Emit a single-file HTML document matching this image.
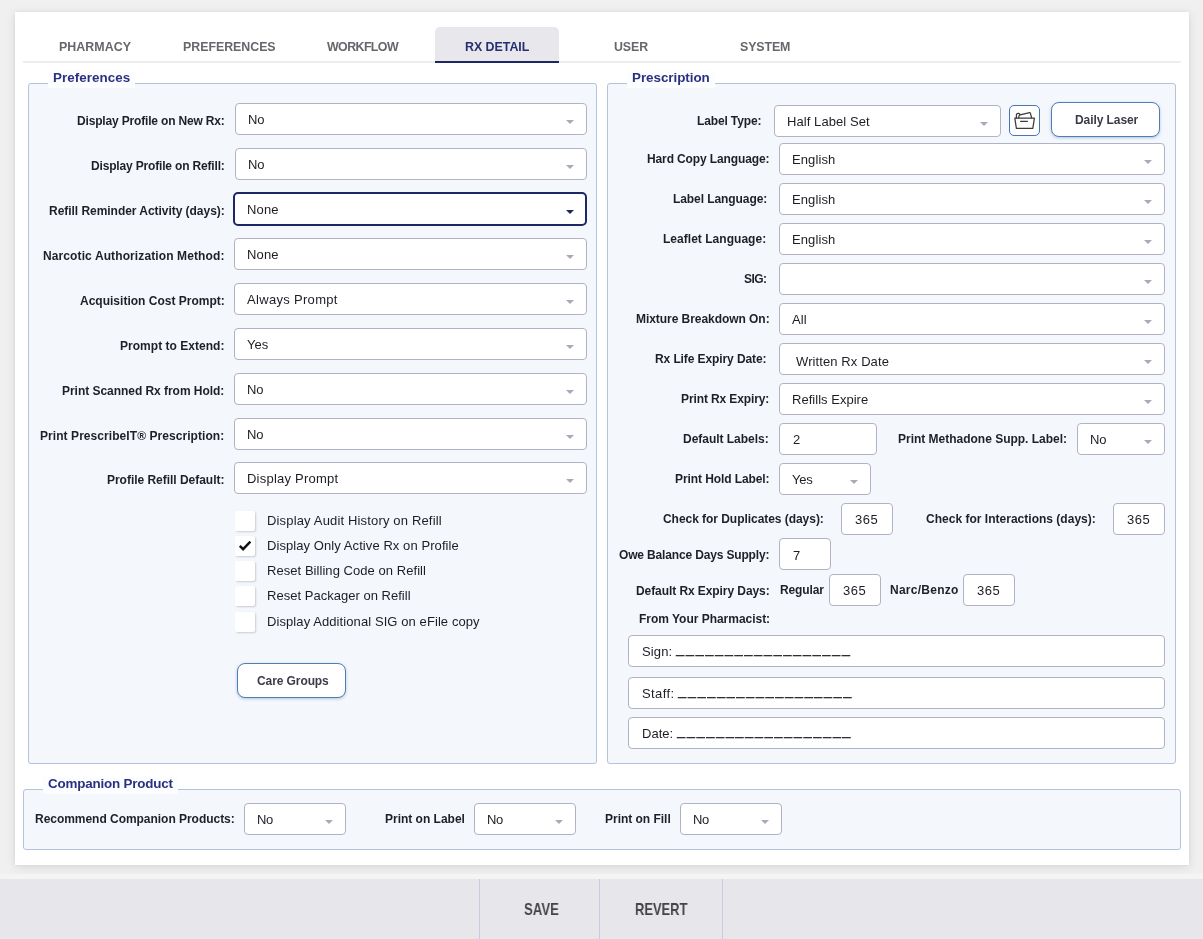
<!DOCTYPE html><html><head><meta charset="utf-8"><title>Rx Detail</title><style>
*{box-sizing:border-box;margin:0;padding:0}
html,body{width:1203px;height:939px;overflow:hidden}
body{background:#f0f0f0;font-family:"Liberation Sans",sans-serif;color:#23232b;position:relative}
.card{position:absolute;left:15px;top:12px;width:1174px;height:853px;background:#fff;box-shadow:0 2px 10px rgba(0,0,0,.10),0 0 3px rgba(0,0,0,.06)}
.tabline{position:absolute;left:23px;top:61px;width:1158px;height:2px;background:#ededf0}
.tabbg{position:absolute;left:435px;top:27px;width:124px;height:36px;background:#e7e7ec;border-bottom:2px solid #1d2766;border-radius:5px 5px 0 0}
.t{position:absolute;white-space:nowrap;height:16px;line-height:16px;will-change:transform}
.tab{font-weight:bold;font-size:12.4px;color:#66666c}
.tab.active{color:#27306f}
.fs{position:absolute;border:1px solid #b4c3da;border-radius:3px;background:#f4f7fc}
.lgb{position:absolute;background:#fcfdff;height:17px}
.lg{color:#2a3180;font-weight:bold;font-size:13.4px}
.lb{font-weight:bold;font-size:12px;color:#1f1f28}
.v{font-size:13px;color:#1d1d25}
.sel,.inp{position:absolute;background:#fff;border:1px solid #b2b2c6;border-radius:4px;height:32px}
.sel:after{content:"";position:absolute;right:12px;top:16px;border-left:4px solid transparent;border-right:4px solid transparent;border-top:4px solid #a9a9b9}
.sel.focus{border:2px solid #1d2766;border-radius:5px}
.sel.focus:after{border-top-color:#1d2766;right:11px;top:16px}
.cb{position:absolute;width:20px;height:20px;background:#fff;border-radius:2px;box-shadow:1px 1px 2px rgba(0,0,0,.18)}
.btn{position:absolute;background:#fff;border:1.8px solid #4f7db5;border-radius:8px;box-shadow:0 1px 3px rgba(60,100,160,.35)}
.bt{font-weight:bold;font-size:12px;color:#3b3b48}
.bar{position:absolute;left:0;top:879px;width:1203px;height:60px;background:#e7e7eb}
.vl{position:absolute;top:0;width:1px;height:60px;background:#c6cae2}
.bb{font-weight:bold;font-size:16.2px;color:#444449;transform-origin:0 50%}
</style></head><body>
<div class="card"></div>
<div class="tabline"></div><div class="tabbg"></div>
<div class="t tab" style="left:58.7px;top:38.5px;letter-spacing:0.051px">PHARMACY</div>
<div class="t tab" style="left:182.7px;top:38.5px;letter-spacing:-0.032px">PREFERENCES</div>
<div class="t tab" style="left:327.3px;top:38.5px;letter-spacing:-0.588px">WORKFLOW</div>
<div class="t tab active" style="left:464.6px;top:38.5px;letter-spacing:-0.02px">RX DETAIL</div>
<div class="t tab" style="left:613.9px;top:38.5px;letter-spacing:-0.109px">USER</div>
<div class="t tab" style="left:739.6px;top:38.5px;letter-spacing:-0.109px">SYSTEM</div>
<div class="fs" style="left:28px;top:83px;width:569px;height:681px"></div>
<div class="lgb" style="left:48px;top:71px;width:87px"></div>
<div class="t lg" style="left:52.7px;top:70.0px;letter-spacing:0.047px">Preferences</div>
<div class="fs" style="left:607px;top:83px;width:569px;height:681px"></div>
<div class="lgb" style="left:627px;top:71px;width:88px"></div>
<div class="t lg" style="left:631.7px;top:70.0px;letter-spacing:-0.037px">Prescription</div>
<div class="fs" style="left:23px;top:789px;width:1158px;height:61px"></div>
<div class="lgb" style="left:43px;top:777px;width:135px"></div>
<div class="t lg" style="left:48.0px;top:775.5px;letter-spacing:-0.18px">Companion Product</div>
<div class="sel " style="left:235px;width:352px;top:103px"></div>
<div class="t lb" style="left:76.7px;top:112.5px;letter-spacing:-0.167px">Display Profile on New Rx:</div>
<div class="t v" style="left:247.7px;top:112.0px;letter-spacing:-0.213px">No</div>
<div class="sel " style="left:235px;width:352px;top:148px"></div>
<div class="t lb" style="left:90.7px;top:157.5px;letter-spacing:-0.167px">Display Profile on Refill:</div>
<div class="t v" style="left:247.7px;top:157.0px;letter-spacing:-0.213px">No</div>
<div class="sel focus" style="left:233px;width:354px;top:192px;height:34px"></div>
<div class="t lb" style="left:48.7px;top:202.5px;letter-spacing:-0.039px">Refill Reminder Activity (days):</div>
<div class="t v" style="left:246.7px;top:202.0px;letter-spacing:0.155px">None</div>
<div class="sel " style="left:234px;width:353px;top:238px"></div>
<div class="t lb" style="left:42.9px;top:247.5px;letter-spacing:0.109px">Narcotic Authorization Method:</div>
<div class="t v" style="left:246.7px;top:247.0px;letter-spacing:0.155px">None</div>
<div class="sel " style="left:234px;width:353px;top:283px"></div>
<div class="t lb" style="left:79.6px;top:292.5px;letter-spacing:0.005px">Acquisition Cost Prompt:</div>
<div class="t v" style="left:246.7px;top:292.0px;letter-spacing:0.315px">Always Prompt</div>
<div class="sel " style="left:234px;width:353px;top:328px"></div>
<div class="t lb" style="left:119.9px;top:337.5px;letter-spacing:0.029px">Prompt to Extend:</div>
<div class="t v" style="left:246.7px;top:337.0px;letter-spacing:-0.006px">Yes</div>
<div class="sel " style="left:234px;width:353px;top:373px"></div>
<div class="t lb" style="left:62.1px;top:382.5px;letter-spacing:-0.039px">Print Scanned Rx from Hold:</div>
<div class="t v" style="left:246.7px;top:382.0px;letter-spacing:-0.213px">No</div>
<div class="sel " style="left:234px;width:353px;top:418px"></div>
<div class="t lb" style="left:40.1px;top:427.5px;letter-spacing:0.065px">Print PrescribeIT&reg; Prescription:</div>
<div class="t v" style="left:246.7px;top:427.0px;letter-spacing:-0.213px">No</div>
<div class="sel " style="left:234px;width:353px;top:462px"></div>
<div class="t lb" style="left:107.0px;top:471.5px;letter-spacing:-0.027px">Profile Refill Default:</div>
<div class="t v" style="left:246.7px;top:471.0px;letter-spacing:0.233px">Display Prompt</div>
<div class="cb" style="left:235px;top:510.5px"></div>
<div class="t v" style="left:267.1px;top:513.0px;letter-spacing:0.161px">Display Audit History on Refill</div>
<div class="cb" style="left:235px;top:536px"><svg width="20" height="20" viewBox="0 0 20 20"><path d="M4.8 9.8l3.3 3.4l7.3-7.6" fill="none" stroke="#111" stroke-width="2.4"/></svg></div>
<div class="t v" style="left:267.1px;top:537.5px;letter-spacing:0.076px">Display Only Active Rx on Profile</div>
<div class="cb" style="left:235px;top:561px"></div>
<div class="t v" style="left:267.1px;top:562.5px;letter-spacing:0.052px">Reset Billing Code on Refill</div>
<div class="cb" style="left:235px;top:586px"></div>
<div class="t v" style="left:267.1px;top:587.5px;letter-spacing:0.022px">Reset Packager on Refill</div>
<div class="cb" style="left:235px;top:612px"></div>
<div class="t v" style="left:267.1px;top:613.5px;letter-spacing:0.087px">Display Additional SIG on eFile copy</div>
<div class="btn" style="left:237px;top:663px;width:109px;height:35px"></div>
<div class="t bt" style="left:256.7px;top:673.0px;letter-spacing:-0.09px">Care Groups</div>
<div class="sel " style="left:774px;width:227px;top:105px"></div>
<div class="t lb" style="left:697.0px;top:113.0px;letter-spacing:-0.136px">Label Type:</div>
<div class="t v" style="left:787.2px;top:114.0px;letter-spacing:0.073px">Half Label Set</div>
<div class="btn" style="left:1009px;top:105px;width:31px;height:31px;border-width:1.6px;border-color:#4775b5;border-radius:5px;box-shadow:none"><svg width="29" height="29" viewBox="0 0 29 29" style="display:block"><g fill="none" stroke="#3c3c3c" stroke-width="1.25" stroke-linejoin="round" stroke-linecap="round"><path d="M4.8 12.2h19.6l-1.6 10.2h-16.4z"/><path d="M10.6 15.4h6.8"/><path d="M6.4 12v-3.2q.2-1.6 2-1.5q1.6.2 1.7 1.6l9.5-2.3q.6-.1.8.5l1.2 4.8"/><path d="M9.8 8.3q-1.3 1.5-1 3.7"/></g></svg></div>
<div class="btn" style="left:1051px;top:102px;width:109px;height:35px"></div>
<div class="t bt" style="left:1074.7px;top:111.5px;letter-spacing:-0.077px">Daily Laser</div>
<div class="sel " style="left:779px;width:386px;top:143px"></div>
<div class="t lb" style="left:647.1px;top:151.0px;letter-spacing:-0.12px">Hard Copy Language:</div>
<div class="t v" style="left:792.2px;top:152.0px;letter-spacing:0.108px">English</div>
<div class="sel " style="left:779px;width:386px;top:183px"></div>
<div class="t lb" style="left:673.3px;top:191.0px;letter-spacing:-0.076px">Label Language:</div>
<div class="t v" style="left:792.2px;top:192.0px;letter-spacing:0.108px">English</div>
<div class="sel " style="left:779px;width:386px;top:223px"></div>
<div class="t lb" style="left:663.3px;top:231.0px;letter-spacing:0.03px">Leaflet Language:</div>
<div class="t v" style="left:792.2px;top:232.0px;letter-spacing:0.108px">English</div>
<div class="sel " style="left:779px;width:386px;top:263px"></div>
<div class="t lb" style="left:743.9px;top:271.0px;letter-spacing:-0.518px">SIG:</div>
<div class="sel " style="left:779px;width:386px;top:303px"></div>
<div class="t lb" style="left:635.9px;top:311.0px;letter-spacing:-0.052px">Mixture Breakdown On:</div>
<div class="t v" style="left:792.2px;top:312.0px;letter-spacing:0.082px">All</div>
<div class="sel " style="left:779px;width:386px;top:343px"></div>
<div class="t lb" style="left:655.1px;top:351.0px;letter-spacing:-0.099px">Rx Life Expiry Date:</div>
<div class="t v" style="left:796.2px;top:354.0px;letter-spacing:0.099px">Written Rx Date</div>
<div class="sel " style="left:779px;width:386px;top:383px"></div>
<div class="t lb" style="left:681.3px;top:391.0px;letter-spacing:-0.114px">Print Rx Expiry:</div>
<div class="t v" style="left:792.2px;top:392.0px;letter-spacing:0.024px">Refills Expire</div>
<div class="inp" style="left:779px;width:98px;top:423px"></div>
<div class="t lb" style="left:683.3px;top:431.0px;letter-spacing:-0.028px">Default Labels:</div>
<div class="t v" style="left:792.7px;top:431.5px;letter-spacing:-0.034px">2</div>
<div class="sel " style="left:1077px;width:88px;top:423px"></div>
<div class="t lb" style="left:897.9px;top:431.0px;letter-spacing:-0.012px">Print Methadone Supp. Label:</div>
<div class="t v" style="left:1089.7px;top:431.5px;letter-spacing:-0.213px">No</div>
<div class="sel " style="left:779px;width:92px;top:463px"></div>
<div class="t lb" style="left:675.0px;top:471.0px;letter-spacing:-0.088px">Print Hold Label:</div>
<div class="t v" style="left:792.2px;top:471.5px;letter-spacing:-0.173px">Yes</div>
<div class="inp" style="left:841px;width:52px;top:503px"></div>
<div class="t lb" style="left:662.8px;top:511.0px;letter-spacing:-0.045px">Check for Duplicates (days):</div>
<div class="t v" style="left:854.7px;top:511.5px;letter-spacing:0.499px">365</div>
<div class="inp" style="left:1113px;width:52px;top:503px"></div>
<div class="t lb" style="left:925.8px;top:511.0px;letter-spacing:0.014px">Check for Interactions (days):</div>
<div class="t v" style="left:1126.7px;top:511.5px;letter-spacing:0.499px">365</div>
<div class="inp" style="left:779px;width:52px;top:538px"></div>
<div class="t lb" style="left:619.2px;top:547.0px;letter-spacing:-0.157px">Owe Balance Days Supply:</div>
<div class="t v" style="left:792.7px;top:547.5px;letter-spacing:-0.034px">7</div>
<div class="t lb" style="left:635.9px;top:582.7px;letter-spacing:-0.078px">Default Rx Expiry Days:</div>
<div class="t lb" style="left:780.0px;top:582.0px;letter-spacing:-0.112px">Regular</div>
<div class="inp" style="left:829px;width:52px;top:574px"></div>
<div class="t v" style="left:842.7px;top:582.5px;letter-spacing:0.499px">365</div>
<div class="t lb" style="left:890.2px;top:582.0px;letter-spacing:0.267px">Narc/Benzo</div>
<div class="inp" style="left:963px;width:52px;top:574px"></div>
<div class="t v" style="left:976.7px;top:582.5px;letter-spacing:0.499px">365</div>
<div class="t lb" style="left:639.1px;top:610.7px;letter-spacing:-0.024px">From Your Pharmacist:</div>
<div class="inp" style="left:628px;width:537px;top:635px"></div>
<div class="t v" style="left:641.7px;top:644.0px;letter-spacing:0.112px">Sign:</div>
<div class="t v" style="left:675.7px;top:639.5px;letter-spacing:1.413px;text-shadow:0 1px 0 rgba(29,29,37,.3);font-size:15px">__________________</div>
<div class="inp" style="left:628px;width:537px;top:677px"></div>
<div class="t v" style="left:641.7px;top:686.0px;letter-spacing:0.396px">Staff:</div>
<div class="t v" style="left:678.3px;top:681.5px;letter-spacing:1.379px;text-shadow:0 1px 0 rgba(29,29,37,.3);font-size:15px">__________________</div>
<div class="inp" style="left:628px;width:537px;top:717px"></div>
<div class="t v" style="left:641.7px;top:726.0px;letter-spacing:0.024px">Date:</div>
<div class="t v" style="left:677.2px;top:721.5px;letter-spacing:1.385px;text-shadow:0 1px 0 rgba(29,29,37,.3);font-size:15px">__________________</div>
<div class="sel " style="left:244px;width:102px;top:803px"></div>
<div class="t lb" style="left:35.3px;top:811.0px;letter-spacing:-0.034px">Recommend Companion Products:</div>
<div class="t v" style="left:257.4px;top:811.5px;letter-spacing:-0.312px">No</div>
<div class="sel " style="left:474px;width:102px;top:803px"></div>
<div class="t lb" style="left:385.1px;top:811.0px;letter-spacing:-0.008px">Print on Label</div>
<div class="t v" style="left:487.4px;top:811.5px;letter-spacing:-0.312px">No</div>
<div class="sel " style="left:680px;width:102px;top:803px"></div>
<div class="t lb" style="left:604.9px;top:811.0px;letter-spacing:-0.023px">Print on Fill</div>
<div class="t v" style="left:693.4px;top:811.5px;letter-spacing:-0.313px">No</div>
<div style="position:absolute;left:0;top:874px;width:1203px;height:5px;background:#f4f4f4"></div>
<div class="bar"><div class="vl" style="left:479px"></div><div class="vl" style="left:599px"></div><div class="vl" style="left:722px"></div></div>
<div class="t bb" style="left:523.5px;top:901px;transform:scaleX(0.816)">SAVE</div>
<div class="t bb" style="left:634.9px;top:901px;transform:scaleX(0.798)">REVERT</div>
</body></html>
